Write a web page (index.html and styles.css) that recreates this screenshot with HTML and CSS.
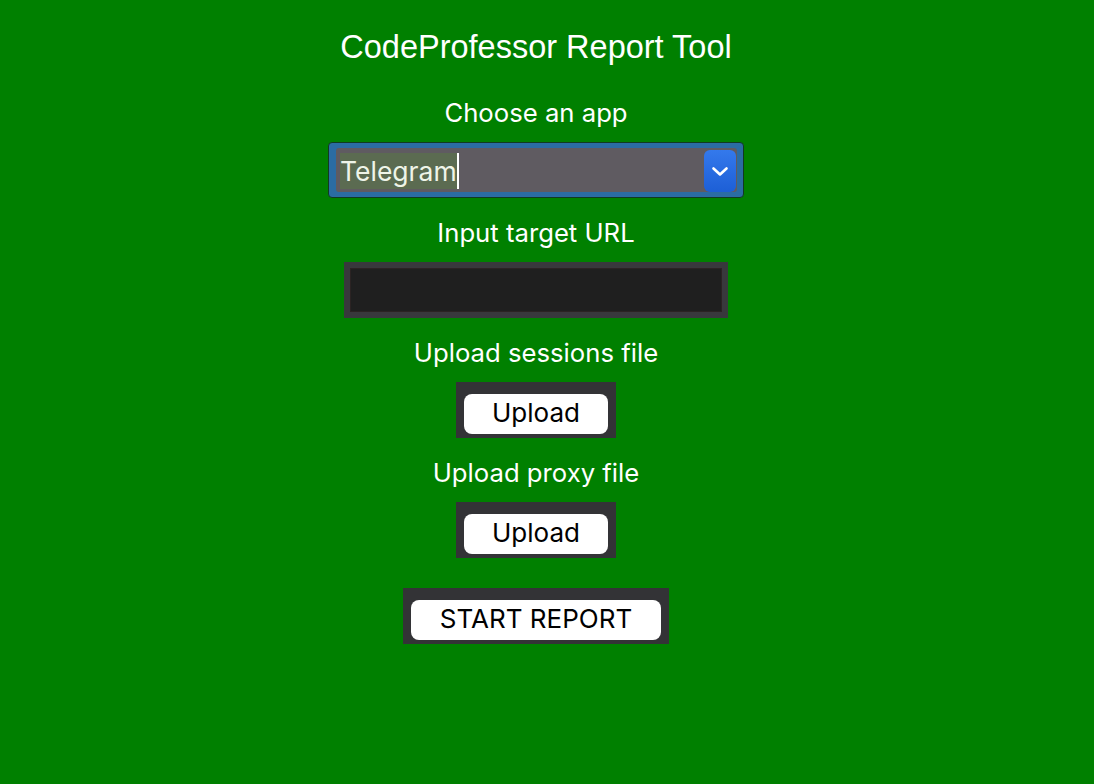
FILE: index.html
```html
<!DOCTYPE html>
<html lang="en">
<head>
    <meta charset="UTF-8">
    <meta name="viewport" content="width=device-width, initial-scale=1.0">
    <title>CodeProfessor Report Tool</title>
    <link rel="stylesheet" href="styles.css">
</head>
<body>
    <section class="main">
        <h1 class="title">CodeProfessor Report Tool</h1>
        <section class="form">
            <div class="field">
                <label class="label">Choose an app</label>
                <div class="select-box">
                    <div class="select-inner">
                        <span class="select-value"><span class="picked">Telegram</span><span class="caret"></span></span>
                        <span class="select-arrow">
                            <svg width="18" height="11" viewBox="0 0 18 11"><path d="M2.5 2.5 L9 8.5 L15.5 2.5" fill="none" stroke="#fff" stroke-width="2.6" stroke-linecap="round" stroke-linejoin="round"/></svg>
                        </span>
                    </div>
                </div>
            </div>
            <div class="field">
                <label class="label">Input target URL</label>
                <div class="url-box"></div>
            </div>
            <div class="field">
                <label class="label">Upload sessions file</label>
                <div class="btn-wrap upload-wrap"><button class="btn">Upload</button></div>
            </div>
            <div class="field">
                <label class="label">Upload proxy file</label>
                <div class="btn-wrap upload-wrap"><button class="btn">Upload</button></div>
            </div>
            <div class="btn-wrap start-wrap"><button class="btn">START REPORT</button></div>
        </section>
    </section>
</body>
</html>
```

FILE: styles.css
```css
body {
    margin: 0;
    padding: 0;
    background-color: #008000;
    color: #fff;
    font-family: Inter, "Liberation Sans", sans-serif;
    height: 784px;
}

.main {
    display: flex;
    flex-direction: column;
    align-items: center;
    padding-top: 28px;
    padding-right: 22px;
}

.title {
    margin: 0;
    font-family: "Liberation Sans", Arial, sans-serif;
    font-size: 32.5px;
    font-weight: normal;
    line-height: 38px;
}

.form {
    display: flex;
    flex-direction: column;
    align-items: center;
    gap: 20px;
    margin-top: 32px;
}

.field {
    display: flex;
    flex-direction: column;
    align-items: center;
    gap: 14px;
}

.label {
    font-size: 25.7px;
    line-height: 30px;
}

.select-box {
    box-sizing: border-box;
    width: 416px;
    height: 56px;
    border: 1px solid #123a22;
    border-radius: 4px;
    background-color: #2b6ca3;
    padding: 5px 6px 5px 7px;
}

.select-inner {
    display: flex;
    align-items: center;
    justify-content: space-between;
    height: 44px;
    background-color: #5f5b61;
    border-radius: 3px;
    padding: 2px 1px 0 4px;
    box-sizing: border-box;
}

.select-value {
    display: flex;
    align-items: center;
    font-size: 26.5px;
}

.picked {
    background-color: #5b6b51;
    color: #eef4e8;
    line-height: 36px;
}

.caret {
    width: 2px;
    height: 36px;
    background-color: #fff;
}

.select-arrow {
    display: flex;
    align-items: center;
    justify-content: center;
    align-self: flex-end;
    width: 32px;
    height: 42px;
    border-radius: 6px;
    background: linear-gradient(#3479ec, #1d5fd6);
}

.url-box {
    box-sizing: border-box;
    width: 384px;
    height: 56px;
    border: 6px solid #38383c;
    background-color: #1f1f1f;
    box-shadow: inset 0 0 0 1px #2b2323;
}

.btn-wrap {
    display: flex;
    background-color: #333336;
    padding: 12px 8px 4px 8px;
}

.upload-wrap .btn {
    width: 144px;
}

.start-wrap {
    margin-top: 10px;
}

.start-wrap .btn {
    width: 250px;
}

.btn {
    height: 40px;
    border: none;
    border-radius: 8px;
    background-color: #fff;
    color: #000;
    font-family: Inter, "Liberation Sans", sans-serif;
    font-size: 26px;
    padding: 0 0 3px 0;
}
```
